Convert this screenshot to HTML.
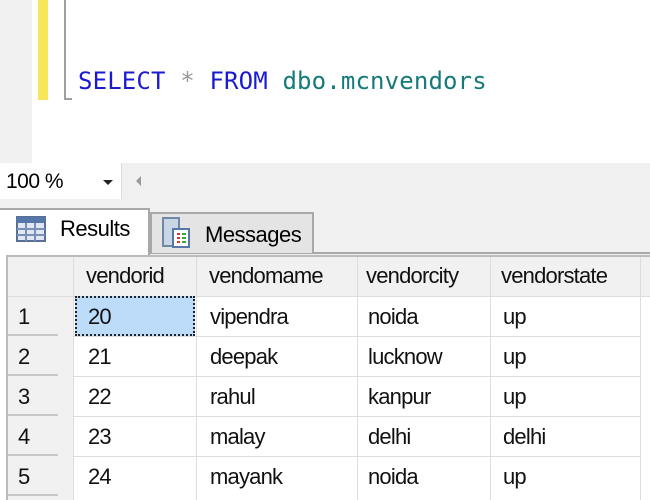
<!DOCTYPE html>
<html><head><style>
*{margin:0;padding:0;box-sizing:border-box}
body{width:650px;height:500px;overflow:hidden;background:#fff;position:relative;font-family:"Liberation Sans",Arial,sans-serif}
.a{position:absolute}
.cell{position:absolute;font-size:22px;color:#111;letter-spacing:-0.8px}
</style></head><body>
<div class="a" style="left:0;top:0;width:32px;height:163px;background:#f0f0f0"></div>
<div class="a" style="left:38px;top:0;width:10px;height:100px;background:#f7e65a"></div>
<div class="a" style="left:64px;top:0;width:2px;height:100px;background:#a0a0a0"></div>
<div class="a" style="left:64px;top:98px;width:8px;height:2px;background:#a0a0a0"></div>
<div class="a" style="left:78px;top:67px;font-family:'DejaVu Sans Mono','Liberation Mono',monospace;font-size:24px;white-space:pre;letter-spacing:0.15px"><span style="color:#1a1ad0">SELECT</span> <span style="color:#999">*</span> <span style="color:#1a1ad0">FROM</span> <span style="color:#157a7a">dbo.mcnvendors</span></div>
<div class="a" style="left:0;top:163px;width:650px;height:92px;background:#f0f0f0"></div>
<div class="a" style="left:0;top:163px;width:122px;height:36px;background:#fff;border-right:1px solid #ddd"></div>
<div class="a" style="left:6px;top:170px;font-size:21px;letter-spacing:-0.5px">100 %</div>
<div class="a" style="left:103px;top:180px;width:0;height:0;border-left:5px solid transparent;border-right:5px solid transparent;border-top:5px solid #222"></div>
<div class="a" style="left:136px;top:176px;width:0;height:0;border-top:5px solid transparent;border-bottom:5px solid transparent;border-right:5px solid #999"></div>
<div class="a" style="left:0;top:252px;width:650px;height:2px;background:#a8a8a8"></div>
<div class="a" style="left:150px;top:212px;width:164px;height:41px;background:#e4e4e4;border:2px solid #a8a8a8;border-bottom:none"></div>
<div class="a" style="left:0;top:208px;width:150px;height:47px;background:#fff;border:2px solid #a8a8a8;border-left:none;border-bottom:none"></div>
<svg class="a" style="left:16px;top:216px" width="30" height="26"><rect x="1" y="1" width="28" height="24" fill="#dfe7f3" stroke="#5a6f95" stroke-width="2"/><rect x="1" y="1" width="28" height="6" fill="#5577aa"/><path d="M10 7V25M19 7V25M1 13H29M1 19H29" stroke="#7a8fb5" stroke-width="2"/></svg>
<div class="a" style="left:60px;top:216px;font-size:22px;letter-spacing:-0.5px">Results</div>
<svg class="a" style="left:161px;top:216px" width="30" height="32"><rect x="2" y="2" width="16" height="28" fill="#c8d6e6" stroke="#7088a8" stroke-width="2"/><rect x="12" y="13" width="16" height="18" fill="#fff" stroke="#5577aa" stroke-width="2"/><path d="M16 18h3M16 22h3M16 26h3" stroke="#d33" stroke-width="2"/><path d="M21 18h4M21 22h4M21 26h4" stroke="#3a3" stroke-width="2"/></svg>
<div class="a" style="left:205px;top:222px;font-size:22px;letter-spacing:-0.5px">Messages</div>
<div class="a" style="left:6px;top:255px;width:644px;height:245px;background:#fff;border-left:2px solid #bbb;border-top:2px solid #bbb"></div>
<div class="a" style="left:8px;top:257px;width:642px;height:39px;background:#f1f1f1"></div>
<div class="a" style="left:8px;top:296px;width:65px;height:204px;background:#f1f1f1"></div>
<div class="a" style="left:73px;top:257px;width:1px;height:243px;background:#ddd"></div>
<div class="a" style="left:196px;top:257px;width:1px;height:243px;background:#ddd"></div>
<div class="a" style="left:357px;top:257px;width:1px;height:243px;background:#ddd"></div>
<div class="a" style="left:490px;top:257px;width:1px;height:243px;background:#ddd"></div>
<div class="a" style="left:640px;top:257px;width:1px;height:243px;background:#ddd"></div>
<div class="a" style="left:8px;top:296px;width:642px;height:1px;background:#ddd"></div>
<div class="a" style="left:73px;top:336px;width:568px;height:1px;background:#ddd"></div>
<div class="a" style="left:73px;top:376px;width:568px;height:1px;background:#ddd"></div>
<div class="a" style="left:73px;top:416px;width:568px;height:1px;background:#ddd"></div>
<div class="a" style="left:73px;top:456px;width:568px;height:1px;background:#ddd"></div>
<div class="a" style="left:8px;top:334px;width:50px;height:2px;background:#c8c8c8"></div>
<div class="a" style="left:8px;top:374px;width:50px;height:2px;background:#c8c8c8"></div>
<div class="a" style="left:8px;top:414px;width:50px;height:2px;background:#c8c8c8"></div>
<div class="a" style="left:8px;top:454px;width:50px;height:2px;background:#c8c8c8"></div>
<div class="a" style="left:8px;top:494px;width:50px;height:2px;background:#c8c8c8"></div>
<div class="a" style="left:75px;top:296px;width:120px;height:40px;background:#bcdcfa;border:2px dotted #222"></div>
<div class="cell" style="left:86px;top:263px">vendorid</div>
<div class="cell" style="left:209px;top:263px">vendomame</div>
<div class="cell" style="left:366px;top:263px">vendorcity</div>
<div class="cell" style="left:501px;top:263px">vendorstate</div>

<div class="cell" style="left:18px;top:304px">1</div><div class="cell" style="left:88px;top:304px">20</div><div class="cell" style="left:210px;top:304px">vipendra</div><div class="cell" style="left:368px;top:304px">noida</div><div class="cell" style="left:503px;top:304px">up</div>
<div class="cell" style="left:18px;top:344px">2</div><div class="cell" style="left:88px;top:344px">21</div><div class="cell" style="left:210px;top:344px">deepak</div><div class="cell" style="left:368px;top:344px">lucknow</div><div class="cell" style="left:503px;top:344px">up</div>
<div class="cell" style="left:18px;top:384px">3</div><div class="cell" style="left:88px;top:384px">22</div><div class="cell" style="left:210px;top:384px">rahul</div><div class="cell" style="left:368px;top:384px">kanpur</div><div class="cell" style="left:503px;top:384px">up</div>
<div class="cell" style="left:18px;top:424px">4</div><div class="cell" style="left:88px;top:424px">23</div><div class="cell" style="left:210px;top:424px">malay</div><div class="cell" style="left:368px;top:424px">delhi</div><div class="cell" style="left:503px;top:424px">delhi</div>
<div class="cell" style="left:18px;top:464px">5</div><div class="cell" style="left:88px;top:464px">24</div><div class="cell" style="left:210px;top:464px">mayank</div><div class="cell" style="left:368px;top:464px">noida</div><div class="cell" style="left:503px;top:464px">up</div>
</body></html>
